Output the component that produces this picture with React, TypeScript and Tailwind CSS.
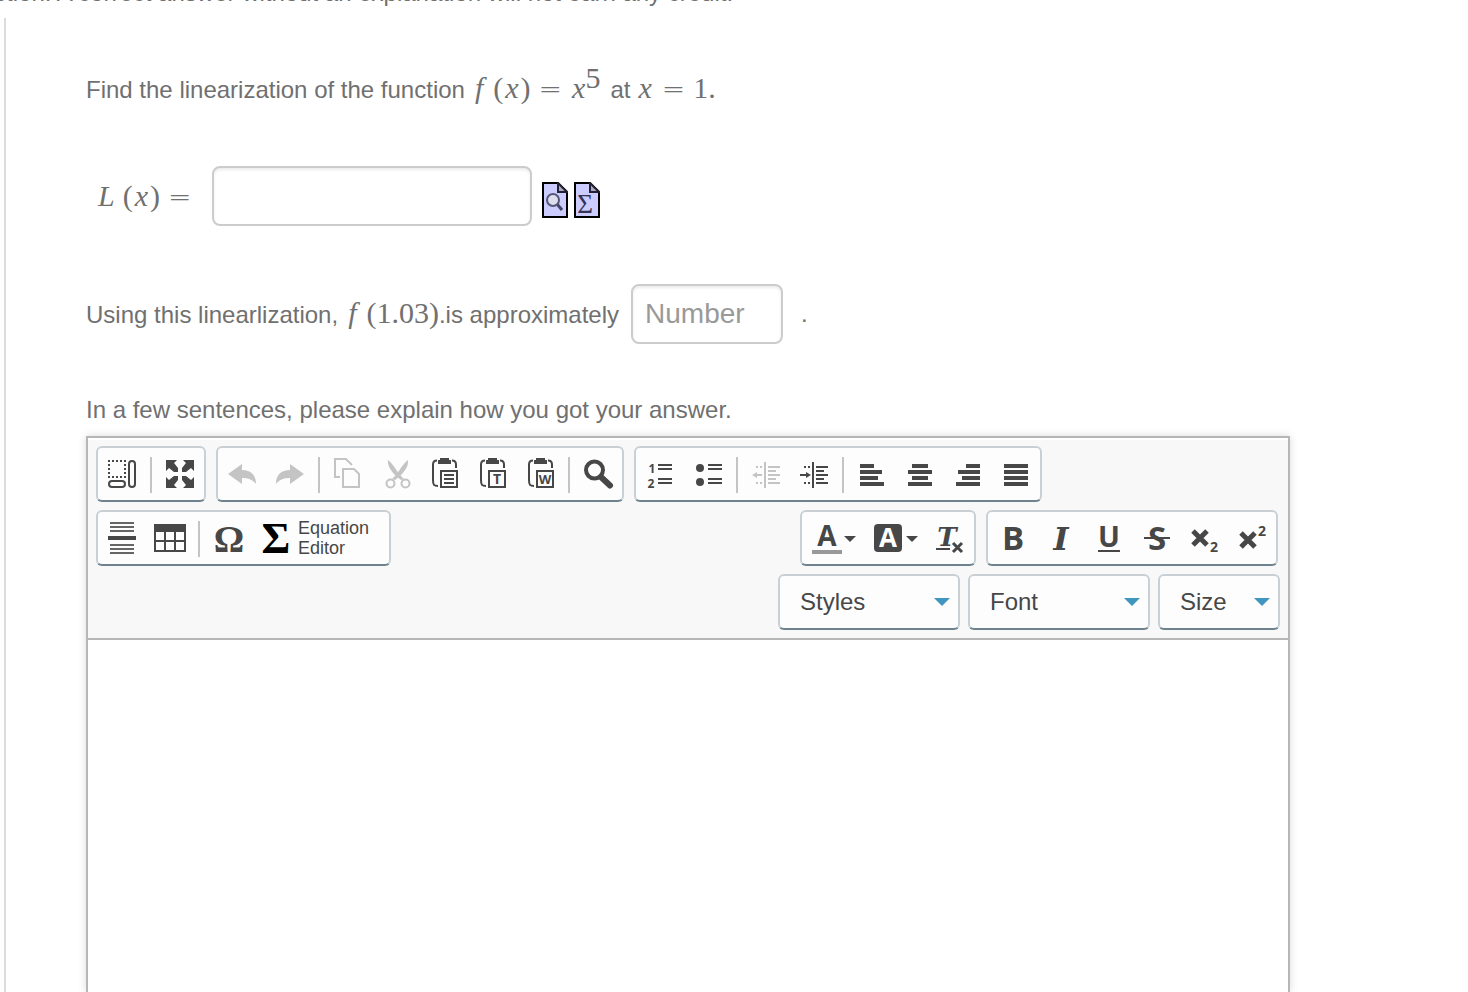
import type { ReactNode } from 'react';
import clsx from 'clsx';

type IconProps = { children: ReactNode; width?: number };

const Icon = ({ children, width = 48 }: IconProps) => (
  <svg
    width={width}
    height={52}
    viewBox={`0 0 ${width} 52`}
    fill="currentColor"
    aria-hidden="true"
  >
    {children}
  </svg>
);

type ToolProps = { label: string; children: ReactNode; disabled?: boolean };

const Tool = ({ label, children, disabled }: ToolProps) => (
  <button
    type="button"
    aria-label={label}
    disabled={disabled}
    className={clsx(
      'flex shrink-0 h-[52px]',
      disabled ? 'text-[#c4c4c4]' : 'text-[#474747]'
    )}
  >
    {children}
  </button>
);

const Group = ({ children }: { children: ReactNode }) => (
  <div className="flex shrink-0 items-center bg-[#fdfdfd] border-2 border-[#c9d0d5] border-b-[#6e828d] rounded-md">
    {children}
  </div>
);

const Separator = () => <span className="w-0.5 h-9 mx-1 mt-0.5 bg-[#c4c4c4]" />;

const Lines = ({ rows, h }: { rows: number[][]; h: number }) => (
  <>
    {rows.map(([x, y, w]) => (
      <rect key={`${x}-${y}`} x={x} y={y} width={w} height={h} />
    ))}
  </>
);

const Letter = ({
  x,
  y,
  size,
  children,
  className = "font-['Open_Sans',sans-serif] font-bold",
  fill,
}: {
  x: number;
  y: number;
  size: number;
  children: string;
  className?: string;
  fill?: string;
}) => (
  <text
    x={x}
    y={y}
    fontSize={size}
    textAnchor="middle"
    className={className}
    fill={fill}
  >
    {children}
  </text>
);

const Clipboard = ({ children }: { children: ReactNode }) => (
  <Icon>
    <path d="M18 12h2v-2h9v2h2v4H18z" />
    <path
      d="M17 12.5c-3 0-4 1-4 4V32c0 5 1 6 5 6M32 12.5c3 0 4 1 4 4V20"
      fill="none"
      stroke="currentColor"
      strokeWidth="2"
    />
    <rect
      x="21"
      y="23"
      width="16"
      height="16"
      fill="none"
      stroke="currentColor"
      strokeWidth="2"
    />
    {children}
  </Icon>
);

const IndentLines = () => (
  <>
    <rect x="22" y="14" width="2" height="26" />
    <Lines
      h={2}
      rows={[
        [14, 18, 2],
        [18, 18, 2],
        [14, 34, 2],
        [18, 34, 2],
        [26, 18, 12],
        [26, 22, 8],
        [26, 26, 12],
        [26, 30, 8],
        [26, 34, 12],
      ]}
    />
  </>
);

const Cross = ({ d, w }: { d: string; w: number }) => (
  <path d={d} stroke="currentColor" strokeWidth={w} fill="none" />
);

const ToolbarTop = () => (
  <div className="flex flex-wrap gap-2.5">
    <Group>
      <Tool label="Show Blocks">
        <Icon>
          <g fill="none" stroke="currentColor" strokeWidth="2">
            <path
              d="M10 13H28M10 29H28M11 16V28M27 16V28"
              strokeDasharray="2 2"
            />
            <rect x="11" y="33" width="16" height="6" rx="3" />
            <rect x="31" y="13" width="6" height="26" rx="3" />
          </g>
        </Icon>
      </Tool>
      <Separator />
      <Tool label="Maximize">
        <Icon>
          <path d="M10 12h11l-3 3 4 5v4h-4l-5-4-3 3z" />
          <path d="M38 12H27l3 3-4 5v4h4l5-4 3 3z" />
          <path d="M10 40h11l-3-3 4-5v-4h-4l-5 4-3-3z" />
          <path d="M38 40H27l3-3-4-5v-4h4l5 4 3-3z" />
        </Icon>
      </Tool>
    </Group>
    <Group>
      <Tool label="Undo" disabled>
        <Icon>
          <path d="M10 26L24 16v6c9 0 14 5 14 14-4-5-8-6-14-6v6z" />
        </Icon>
      </Tool>
      <Tool label="Redo" disabled>
        <Icon>
          <path d="M38 26L24 16v6c-9 0-14 5-14 14 4-5 8-6 14-6v6z" />
        </Icon>
      </Tool>
      <Separator />
      <Tool label="Copy" disabled>
        <Icon>
          <g fill="none" stroke="currentColor" strokeWidth="2">
            <path d="M16 29h-5V11h11l6 6" />
            <path d="M19 21h11l5 5v13H19z" />
          </g>
        </Icon>
      </Tool>
      <Tool label="Cut" disabled>
        <Icon>
          <path d="M16 12c4 3 8 9 11 14l5 5-3 1-5-4c-4-4-9-10-8-16z" />
          <path d="M36 12c-4 3-8 9-11 14l-5 5 3 1 5-4c4-4 9-10 8-16z" />
          <g fill="none" stroke="currentColor" strokeWidth="2">
            <circle cx="18.500" cy="35.500" r="4" />
            <circle cx="33.500" cy="35.500" r="4" />
          </g>
        </Icon>
      </Tool>
      <Tool label="Paste">
        <Clipboard>
          <Lines
            h={2}
            rows={[
              [24, 26, 10],
              [24, 30, 10],
              [24, 34, 10],
            ]}
          />
        </Clipboard>
      </Tool>
      <Tool label="Paste as plain text">
        <Clipboard>
          <Letter x={29} y={36} size={14}>
            T
          </Letter>
        </Clipboard>
      </Tool>
      <Tool label="Paste from Word">
        <Clipboard>
          <Letter x={29} y={36} size={13}>
            W
          </Letter>
        </Clipboard>
      </Tool>
      <Separator />
      <Tool label="Find">
        <Icon>
          <circle
            cx="20.500"
            cy="22"
            r="8.500"
            fill="none"
            stroke="currentColor"
            strokeWidth="4"
          />
          <path
            d="M27 29l9 8.500"
            stroke="currentColor"
            strokeWidth="6"
            strokeLinecap="round"
          />
        </Icon>
      </Tool>
    </Group>
    <Group>
      <Tool label="Insert/Remove Numbered List">
        <Icon>
          <Letter x={16} y={25} size={12}>
            1
          </Letter>
          <Letter x={15} y={40} size={12}>
            2
          </Letter>
          <Lines
            h={2}
            rows={[
              [22, 16, 14],
              [22, 20, 14],
              [22, 30, 14],
              [22, 34, 14],
            ]}
          />
        </Icon>
      </Tool>
      <Tool label="Insert/Remove Bulleted List">
        <Icon>
          <circle cx="16" cy="20" r="4" />
          <circle cx="16" cy="34" r="4" />
          <Lines
            h={2}
            rows={[
              [24, 16, 14],
              [24, 20, 14],
              [24, 30, 14],
              [24, 34, 14],
            ]}
          />
        </Icon>
      </Tool>
      <Separator />
      <Tool label="Decrease Indent" disabled>
        <Icon>
          <IndentLines />
          <path d="M10 27l5-3v2h5v2h-5v2z" />
        </Icon>
      </Tool>
      <Tool label="Increase Indent">
        <Icon>
          <IndentLines />
          <path d="M21 27l-5-3v2h-6v2h6v2z" />
        </Icon>
      </Tool>
      <Separator />
      <Tool label="Align Left">
        <Icon>
          <Lines
            h={4}
            rows={[
              [12, 16, 14],
              [12, 22, 22],
              [12, 28, 18],
              [12, 34, 24],
            ]}
          />
        </Icon>
      </Tool>
      <Tool label="Center">
        <Icon>
          <Lines
            h={4}
            rows={[
              [16, 16, 16],
              [12, 22, 24],
              [16, 28, 16],
              [12, 34, 24],
            ]}
          />
        </Icon>
      </Tool>
      <Tool label="Align Right">
        <Icon>
          <Lines
            h={4}
            rows={[
              [22, 16, 14],
              [14, 22, 22],
              [18, 28, 18],
              [12, 34, 24],
            ]}
          />
        </Icon>
      </Tool>
      <Tool label="Justify">
        <Icon>
          <Lines
            h={4}
            rows={[
              [12, 16, 24],
              [12, 22, 24],
              [12, 28, 24],
              [12, 34, 24],
            ]}
          />
        </Icon>
      </Tool>
    </Group>
  </div>
);

const ToolbarMiddle = () => (
  <div className="flex flex-wrap gap-2.5 pr-0.5">
    <Group>
      <Tool label="Insert Horizontal Line">
        <Icon>
          <g fill="#666">
            <Lines
              h={2}
              rows={[
                [12, 10, 24],
                [12, 14, 24],
                [12, 18, 24],
                [12, 32, 24],
                [12, 36, 24],
                [12, 40, 24],
              ]}
            />
          </g>
          <rect x="10" y="24" width="28" height="4" />
        </Icon>
      </Tool>
      <Tool label="Table">
        <Icon>
          <path
            d="M8 12h32v28H8zM10 20v8h8v-8zM20 20v8h8v-8zM30 20v8h8v-8zM10 30v8h8v-8zM20 30v8h8v-8zM30 30v8h8v-8z"
            fillRule="evenodd"
          />
        </Icon>
      </Tool>
      <Separator />
      <Tool label="Insert Special Character">
        <Icon>
          <Letter
            x={25}
            y={40}
            size={38}
            className="font-['Liberation_Serif',serif] font-bold"
          >
            Ω
          </Letter>
        </Icon>
      </Tool>
      <button
        type="button"
        className="flex shrink-0 items-center h-[52px] pr-5 text-left text-lg leading-5 text-[#474747]"
      >
        <Icon width={46}>
          <Letter
            x={24}
            y={41}
            size={44}
            fill="#000"
            className="font-['Liberation_Serif',serif] font-bold"
          >
            Σ
          </Letter>
        </Icon>
        <span>
          Equation
          <br />
          Editor
        </span>
      </button>
    </Group>
    <div className="flex gap-2.5 ml-auto">
      <Group>
        <Tool label="Text Color">
          <Icon width={62}>
            <Letter x={25} y={34} size={28}>
              A
            </Letter>
            <rect x="10" y="38" width="30" height="4" fill="#999" />
            <path d="M42 24h12l-6 6z" />
          </Icon>
        </Tool>
        <Tool label="Background Color">
          <Icon width={62}>
            <rect x="10" y="12" width="28" height="28" rx="4" />
            <Letter x={24} y={35} size={26} fill="#fff">
              A
            </Letter>
            <path d="M42 24h12l-6 6z" />
          </Icon>
        </Tool>
        <Tool label="Remove Format">
          <Icon>
            <Letter
              x={21}
              y={34}
              size={26}
              className="font-['DejaVu_Serif',serif] font-bold italic"
            >
              T
            </Letter>
            <rect x="10" y="36" width="14" height="2" />
            <Cross d="M27 31l9 9M36 31l-9 9" w={3} />
          </Icon>
        </Tool>
      </Group>
      <Group>
        <Tool label="Bold">
          <Icon>
            <Letter x={25} y={38} size={33}>
              B
            </Letter>
          </Icon>
        </Tool>
        <Tool label="Italic">
          <Icon>
            <Letter
              x={25}
              y={38}
              size={32}
              className="font-['DejaVu_Serif',serif] font-bold italic"
            >
              I
            </Letter>
          </Icon>
        </Tool>
        <Tool label="Underline">
          <Icon>
            <Letter x={25} y={35} size={29}>
              U
            </Letter>
            <rect x="14" y="38" width="22" height="2" />
          </Icon>
        </Tool>
        <Tool label="Strikethrough">
          <Icon>
            <Letter x={25} y={38} size={33}>
              S
            </Letter>
            <rect x="12" y="25" width="26" height="2" />
          </Icon>
        </Tool>
        <Tool label="Subscript">
          <Icon>
            <Cross d="M13 19l14 14M27 19L13 33" w={5} />
            <Letter x={34} y={40} size={14}>
              2
            </Letter>
          </Icon>
        </Tool>
        <Tool label="Superscript">
          <Icon>
            <Cross d="M13 21l14 14M27 21L13 35" w={5} />
            <Letter x={34} y={24} size={14}>
              2
            </Letter>
          </Icon>
        </Tool>
      </Group>
    </div>
  </div>
);

const Combo = ({ name, className }: { name: string; className: string }) => (
  <div className={clsx('relative', className)}>
    <select
      aria-label={name}
      className="appearance-none w-full h-14 pl-5 text-2xl text-[#474747] bg-[#fdfdfd] border-2 border-[#c9d0d5] border-b-[#6e828d] rounded-md"
    >
      <option>{name}</option>
    </select>
    <svg
      width="16"
      height="8"
      className="absolute right-2.5 top-6 pointer-events-none"
      fill="#4096bd"
      aria-hidden="true"
    >
      <path d="M0 0h16L8 8z" />
    </svg>
  </div>
);

const Editor = () => (
  <div className="flex flex-col grow border-2 border-b-0 border-[#b6b6b6] shadow-[0_0_8px_rgba(0,0,0,0.15)]">
    <div className="flex flex-col gap-2 p-2 bg-[#f8f8f8] border-b-2 border-[#b6b6b6] shadow-[inset_0_2px_0_#fff]">
      <ToolbarTop />
      <ToolbarMiddle />
      <div className="flex justify-end gap-2">
        <Combo name="Styles" className="w-[182px]" />
        <Combo name="Font" className="w-[182px]" />
        <Combo name="Size" className="w-[122px]" />
      </div>
    </div>
    <textarea
      id="explanation"
      className="grow w-full min-h-80 p-5 resize-none outline-none bg-white"
    />
  </div>
);

const MathText = ({
  children,
  className,
}: {
  children: ReactNode;
  className?: string;
}) => (
  <span
    className={clsx(
      "font-['Liberation_Serif',serif] text-[30px] leading-8",
      className
    )}
  >
    {children}
  </span>
);

const Equals = ({ className }: { className: string }) => (
  <span
    className={clsx(
      "font-['DejaVu_Sans',sans-serif] font-extralight text-[28px] leading-8",
      className
    )}
  >
    =
  </span>
);

const PageIcon = ({ children }: { children: ReactNode }) => (
  <svg width="26" height="36" viewBox="0 0 26 36" aria-hidden="true">
    <path d="M1 1h15l9 9v25H1z" fill="#ccf" stroke="#000" strokeWidth="2" />
    <path d="M16 1v9h9z" fill="#aab" stroke="#223" strokeWidth="2" />
    {children}
  </svg>
);

const App = () => {
  return (
    <div className="flex flex-col min-h-screen overflow-x-hidden bg-white text-[#707070] text-2xl font-['Liberation_Sans',Arial,sans-serif]">
      <p className="-mt-[21px] -ml-[46px] leading-7 whitespace-nowrap">
        question. A correct answer without an explanation will not earn any
        credit.
      </p>
      <main className="flex flex-col grow mt-[11px] ml-1 pl-20 pr-[178px] border-l-2 border-[#dcdcdc]">
        <p className="flex items-baseline mt-[54px] leading-8">
          Find the linearization of the function
          <MathText className="ml-2.5 italic">f</MathText>
          <MathText className="ml-2.5">
            (<i className="px-0.5">x</i>)
          </MathText>
          <Equals className="ml-2" />
          <MathText className="ml-2.5 italic">x</MathText>
          <MathText className="relative -top-2.5">5</MathText>
          <span className="ml-2.5">at</span>
          <MathText className="ml-2 italic">x</MathText>
          <Equals className="ml-2.5" />
          <MathText className="ml-2">1.</MathText>
        </p>

        <div className="flex items-center mt-[60px]">
          <label
            htmlFor="linearization"
            className="flex items-baseline w-[126px] pl-3"
          >
            <MathText className="italic">L</MathText>
            <MathText className="ml-2">
              (<i className="px-0.5">x</i>)
            </MathText>
            <Equals className="ml-2" />
          </label>
          <input
            id="linearization"
            type="text"
            className="w-80 h-[60px] px-3 text-[28px] border-2 border-[#ccc] rounded-lg shadow-[inset_0_2px_3px_rgba(0,0,0,0.08)]"
          />
          <button type="button" aria-label="Preview" className="ml-2.5 mt-2">
            <PageIcon>
              <path
                d="M15 22l5 6"
                stroke="#446"
                strokeWidth="3"
                fill="none"
              />
              <circle
                cx="11"
                cy="18"
                r="6"
                fill="#dde"
                stroke="#557"
                strokeWidth="2"
              />
            </PageIcon>
          </button>
          <button
            type="button"
            aria-label="Equation editor"
            className="ml-1.5 mt-2"
          >
            <PageIcon>
              <text
                x="11"
                y="31"
                fontSize="27"
                textAnchor="middle"
                fill="#335"
                className="font-['Liberation_Serif',serif]"
              >
                Σ
              </text>
            </PageIcon>
          </button>
        </div>

        <div className="flex items-center mt-[58px]">
          <label htmlFor="approximation" className="flex items-baseline">
            Using this linearlization,
            <MathText className="ml-2.5 italic">f</MathText>
            <MathText className="ml-2.5">(1.03)</MathText>
            .is approximately
          </label>
          <input
            id="approximation"
            type="text"
            placeholder="Number"
            className="w-[152px] h-[60px] ml-3 px-3 text-[28px] placeholder:text-[#999] border-2 border-[#ccc] rounded-lg shadow-[inset_0_2px_3px_rgba(0,0,0,0.08)]"
          />
          <span className="ml-[18px]">.</span>
        </div>

        <label htmlFor="explanation" className="mt-[50px] mb-2.5 leading-8">
          In a few sentences, please explain how you got your answer.
        </label>
        <Editor />
      </main>
    </div>
  );
};

export default App;
